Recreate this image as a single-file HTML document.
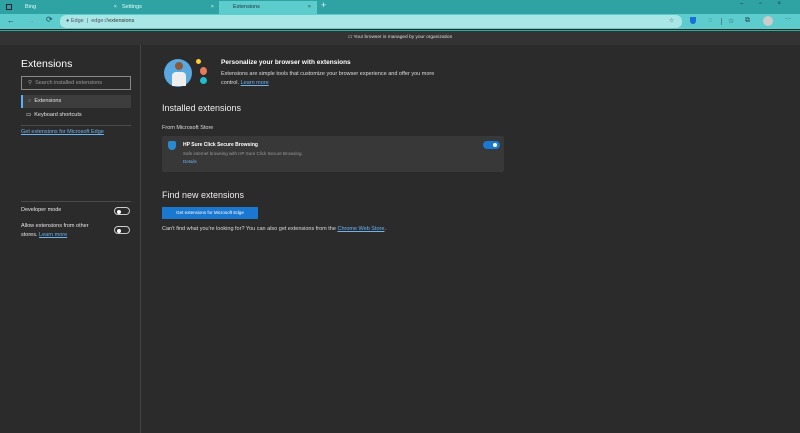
<!DOCTYPE html>
<html><head><style>
*{margin:0;padding:0;box-sizing:border-box}
body{width:800px;height:433px;overflow:hidden;background:#2b2b2b;font-family:"Liberation Sans",sans-serif;color:#e6e6e6;position:relative;font-size:6px}
.a{position:absolute}
.tabs{left:0;top:0;width:800px;height:14px;background:#2fa3a3}
.tab{top:1px;height:13px;font-size:5.5px;color:#dff;line-height:13px}
.tb{left:0;top:14px;width:800px;height:15px;background:#5ccccc}
.addr{left:60px;top:15px;width:622px;height:13px;background:#a9e6e6;border-radius:6px;font-size:5.5px;color:#333;line-height:13px}
.info{left:0;top:30px;width:800px;height:15px;background:#333;border-top:1px solid #3a9;font-size:4.8px;color:#ddd;text-align:center;line-height:14px}
.side{left:0;top:45px;width:141px;height:388px;border-right:1px solid #444}
.lnk{color:#6cb3f0;text-decoration:underline}
.tog{width:16px;height:8px;border:1px solid #ccc;border-radius:4px}
.tog:after{content:"";position:absolute;left:2px;top:1.5px;width:4px;height:4px;border-radius:50%;background:#fff}
.ic{font-size:7px;color:#245;top:3px}
</style></head><body>
<div class="a tabs">
 <div class="a" style="left:6px;top:4px;width:6px;height:6px;border:1px solid #223"></div>
 <div class="a tab" style="left:25px;width:92px;">Bing<span style="float:right">×</span></div>
 <div class="a tab" style="left:122px;width:92px;">Settings<span style="float:right">×</span></div>
 <div class="a tab" style="left:219px;width:98px;background:#5ccccc;padding-left:14px;color:#234">Extensions<span style="float:right;margin-right:6px">×</span></div>
 <div class="a" style="left:321px;top:0;font-size:9px;color:#eef">+</div>
 <div class="a" style="left:740px;top:1px;font-size:6px;color:#234;letter-spacing:16px">–▫×</div>
</div>
<div class="a tb">
 <div class="a" style="left:7px;top:2px;font-size:8px;color:#245">←</div>
 <div class="a" style="left:27px;top:2px;font-size:8px;color:#7aa">→</div>
 <div class="a" style="left:46px;top:1px;font-size:8px;color:#245">⟳</div>
 <div class="a" style="left:690px;top:3px;width:6px;height:7px;background:#1a6fd6;border-radius:0 0 3px 3px"></div>
 <div class="a ic" style="left:708px">◌</div>
 <div class="a" style="left:721px;top:4px;width:1px;height:7px;background:#489"></div>
 <div class="a ic" style="left:728px">☆</div>
 <div class="a ic" style="left:745px">⧉</div>
 <div class="a" style="left:763px;top:2px;width:10px;height:10px;border-radius:50%;background:#ccc"></div>
 <div class="a" style="left:785px;top:2px;font-size:6px;color:#245">···</div>
</div>
<div class="a addr"><span style="margin-left:6px;color:#556">● Edge &nbsp;|&nbsp; edge://</span>extensions<span style="position:absolute;left:609px;color:#456">☆</span></div>
<div class="a info">▭ Your browser is managed by your organization</div>
<div class="a side">
 <div class="a" style="left:21px;top:13px;font-size:10.5px;color:#fff">Extensions</div>
 <div class="a" style="left:21px;top:31px;width:110px;height:14px;border:1px solid #888;font-size:5.5px;color:#999;line-height:12px;padding-left:6px">⚲ &nbsp;Search installed extensions</div>
 <div class="a" style="left:21px;top:50px;width:110px;height:13px;background:#3d3d3d;border-left:2px solid #5ab0f0;font-size:5.5px;line-height:13px;padding-left:5px">◌ &nbsp;Extensions</div>
 <div class="a" style="left:26px;top:65px;font-size:5.5px;line-height:10px">▭ &nbsp;Keyboard shortcuts</div>
 <div class="a" style="left:21px;top:80px;width:110px;border-top:1px solid #4a4a4a"></div>
 <div class="a lnk" style="left:21px;top:84px;font-size:5.5px">Get extensions for Microsoft Edge</div>
 <div class="a" style="left:21px;top:156px;width:110px;border-top:1px solid #4a4a4a"></div>
 <div class="a" style="left:21px;top:162px;font-size:5.5px">Developer mode</div>
 <div class="a tog" style="left:114px;top:162px"></div>
 <div class="a" style="left:21px;top:177px;font-size:5.5px;line-height:9px">Allow extensions from other<br>stores. <span class="lnk">Learn more</span></div>
 <div class="a tog" style="left:114px;top:181px"></div>
</div>
<div class="a" style="left:164px;top:59px;width:28px;height:28px;border-radius:50%;background:#5aa8e0"></div>
<div class="a" style="left:175px;top:62px;width:8px;height:8px;border-radius:50%;background:#8a5a3a"></div>
<div class="a" style="left:172px;top:72px;width:14px;height:14px;background:#eee;border-radius:4px 4px 0 0"></div>
<div class="a" style="left:200px;top:67px;width:7px;height:8px;border-radius:50%;background:#e87a5a"></div>
<div class="a" style="left:200px;top:77px;width:7px;height:7px;border-radius:50%;background:#2bc"></div>
<div class="a" style="left:196px;top:59px;width:5px;height:5px;border-radius:50%;background:#fc3"></div>
<div class="a" style="left:221px;top:59px;font-size:6.5px;font-weight:bold;color:#fff">Personalize your browser with extensions</div>
<div class="a" style="left:221px;top:70px;font-size:5.5px;line-height:8.5px;color:#ddd;width:225px">Extensions are simple tools that customize your browser experience and offer you more control. <span class="lnk">Learn more</span></div>
<div class="a" style="left:162px;top:103px;font-size:9px;color:#eee">Installed extensions</div>
<div class="a" style="left:162px;top:125px;font-size:5.5px;color:#ddd">From Microsoft Store</div>
<div class="a" style="left:162px;top:136px;width:342px;height:36px;background:#383838;border-radius:2px"></div>
<div class="a" style="left:168px;top:141px;width:8px;height:9px;background:#2a8ad0;border-radius:2px 2px 4px 4px"></div>
<div class="a" style="left:183px;top:142px;font-size:5px;font-weight:bold;color:#fff">HP Sure Click Secure Browsing</div>
<div class="a" style="left:183px;top:151px;font-size:4.5px;color:#999">Safe internet browsing with HP Sure Click Secure Browsing.</div>
<div class="a" style="left:183px;top:159px;font-size:4.5px;color:#6cb3f0">Details</div>
<div class="a" style="left:483px;top:141px;width:17px;height:8px;border-radius:4px;background:#1a78d0"></div>
<div class="a" style="left:493px;top:143px;width:4px;height:4px;border-radius:50%;background:#fff"></div>
<div class="a" style="left:162px;top:190px;font-size:9px;color:#eee">Find new extensions</div>
<div class="a" style="left:162px;top:207px;width:96px;height:12px;background:#1a78d0;font-size:4.5px;color:#fff;text-align:center;line-height:12px">Get extensions for Microsoft Edge</div>
<div class="a" style="left:162px;top:226px;font-size:5.5px;color:#ddd">Can't find what you're looking for? You can also get extensions from the <span class="lnk">Chrome Web Store</span>.</div>
</body></html>
